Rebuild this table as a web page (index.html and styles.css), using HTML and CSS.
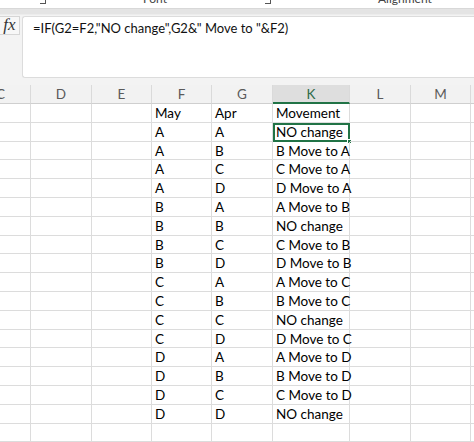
FILE: index.html
```html
<!DOCTYPE html>
<html>
<head>
<meta charset="utf-8">
<link rel="stylesheet" href="styles.css">
</head>
<body>
<div class="app">
  <div class="ribbon">
    <span class="launch l1"></span>
    <span class="rlabel font">Font</span>
    <span class="launch l2"></span>
    <span class="rlabel align">Alignment</span>
  </div>
  <div class="sep"></div>
  <div class="fbar">
    <div class="fx"><i>fx</i></div>
    <div class="formula">=IF(G2=F2,"NO change",G2&amp;" Move to "&amp;F2)</div>
  </div>
  <div class="gap"></div>
  <div class="sheet">
    <div class="row head">
      <div class="c cC">C</div><div class="c cD">D</div><div class="c cE">E</div><div class="c cF">F</div><div class="c cG">G</div><div class="c cK sel">K</div><div class="c cL">L</div><div class="c cM">M</div><div class="c cN"></div>
    </div>
    <div id="rows"></div>
  </div>
</div>
<script src="app.js"></script>
</body>
</html>
```
FILE: app.js
```js
var data = [
  ["May","Apr","Movement"],
  ["A","A","NO change"],["A","B","B Move to A"],["A","C","C Move to A"],["A","D","D Move to A"],
  ["B","A","A Move to B"],["B","B","NO change"],["B","C","C Move to B"],["B","D","D Move to B"],
  ["C","A","A Move to C"],["C","B","B Move to C"],["C","C","NO change"],["C","D","D Move to C"],
  ["D","A","A Move to D"],["D","B","B Move to D"],["D","C","C Move to D"],["D","D","NO change"],
  ["","",""]
];
var html = "";
data.forEach(function (r, i) {
  html += '<div class="row">' +
    '<div class="c cC"></div><div class="c cD"></div><div class="c cE"></div>' +
    '<div class="c cF">' + r[0] + '</div>' +
    '<div class="c cG">' + r[1] + '</div>' +
    '<div class="c cK' + (i === 1 ? ' active' : '') + '">' + r[2] + '</div>' +
    '<div class="c cL"></div><div class="c cM"></div><div class="c cN"></div></div>';
});
document.getElementById("rows").innerHTML = html;
```
FILE: styles.css
```css
html, body { margin: 0; padding: 0; }
body { width: 474px; height: 442px; overflow: hidden; background: #fff; font-family: "Lato", "Open Sans", sans-serif; }
.app { display: flex; flex-direction: column; width: 474px; overflow: hidden; }
.ribbon { position: relative; height: 8px; background: #fff; overflow: hidden; }
.rlabel { position: absolute; top: -7px; font-size: 12px; color: #444; line-height: 12px; }
.font { left: 143px; }
.align { left: 378px; }
.launch { position: absolute; top: 0; width: 5px; height: 3px; border-right: 1px solid #555; border-bottom: 1px solid #555; }
.l1 { left: 40px; }
.l2 { left: 265px; }
.sep { height: 7px; background: #e4e4e4; border-top: 1px solid #d8d8d8; border-bottom: 1px solid #ececec; box-sizing: border-box; }
.fbar { display: flex; background: #f3f3f3; height: 63px; padding-top: 1px; box-sizing: border-box; }
.fx { flex-shrink: 0; width: 20px; height: 19px; border: 1px solid #d6d6d6; border-left: none; background: #f7f7f7; display: flex; align-items: center; justify-content: center; font-family: "Liberation Serif", serif; font-size: 17px; line-height: 17px; color: #333; box-sizing: border-box; padding-bottom: 3px; }
.formula { flex: 1; margin-left: 2px; height: 62px; background: #fff; border: 1px solid #dcdcdc; border-right: none; border-radius: 3px 0 0 3px; box-sizing: border-box; padding: 2px 0 0 10px; font-size: 13px; line-height: 18px; color: #111; white-space: nowrap; }
.gap { height: 7px; background: #f3f3f3; }
.sheet { display: flex; flex-direction: column; }
.row { display: flex; height: 18.8px; }
.row.head { height: 19px; background: #f2f2f2; color: #555; }
.c { flex-shrink: 0; box-sizing: border-box; border-right: 1px solid #dcdcdc; border-bottom: 1px solid #dcdcdc; font-size: 13.5px; line-height: 18px; padding-left: 3px; color: #000; white-space: nowrap; position: relative; }
.head .c { text-align: center; padding-left: 0; color: #5a5a5a; font-size: 13.5px; border-bottom: 1px solid #cfcfcf; border-right: 1px solid #dadada; }
.head .c.sel { background: #dedede; border-bottom: 2px solid #217346; color: #2e6b4a; }
.cC { width: 60px; margin-left: -29px; }
.cD { width: 61px; }
.cE { width: 60px; }
.cF { width: 60px; }
.cG { width: 61px; }
.cK { width: 77px; }
.cL { width: 61px; }
.cM { width: 60px; }
.cN { width: 10px; }
.active { outline: 2px solid #217346; outline-offset: -2px; }
.active::after { content: ""; position: absolute; right: -3px; bottom: -3px; width: 5px; height: 5px; background: #217346; border: 1px solid #fff; box-sizing: border-box; }
```
